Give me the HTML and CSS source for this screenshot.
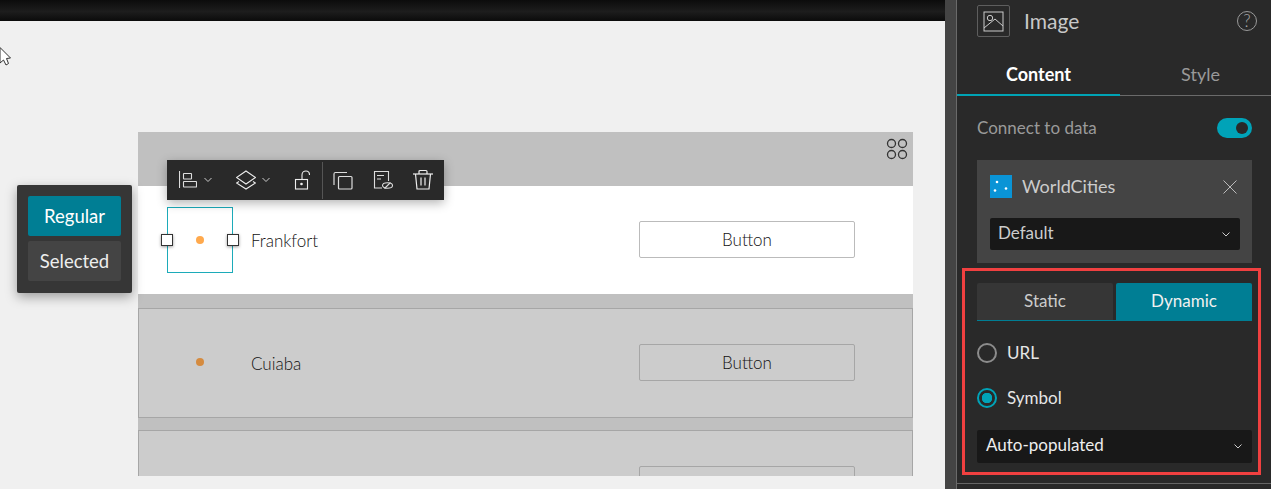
FILE: index.html
```html
<!DOCTYPE html>
<html lang="en">

<head>
  <meta charset="UTF-8" />
  <meta name="viewport" content="width=device-width, initial-scale=1.0" />
  <title>Image widget settings</title>
  <link rel="stylesheet" href="styles.css">
</head>

<body>

  <div class="app">

    <!-- Builder canvas -->
    <main class="stage">
      <div class="topbar"></div>

      <div class="canvas">
        <svg class="cursor" width="12" height="20" viewBox="0 0 12 20">
          <path d="M0 0.500L10.500 11L6.500 11.500L8.500 16.500L6 18L3.500 13L0 16Z" fill="#fff" stroke="#333" stroke-width="1" />
        </svg>

        <div class="list">
          <div class="list-head">
            <svg width="24" height="24" viewBox="0 0 24 24" fill="none" stroke="#333" stroke-width="1.300">
              <circle cx="6.500" cy="6.500" r="4" />
              <circle cx="17.500" cy="6.500" r="4" />
              <circle cx="6.500" cy="17.500" r="4" />
              <circle cx="17.500" cy="17.500" r="4" />
            </svg>
          </div>

          <div class="row row-active">
            <div class="thumb thumb-selected">
              <span class="dot"></span>
              <span class="handle handle-left"></span>
              <span class="handle handle-right"></span>
            </div>
            <span class="city">Frankfort</span>
            <button class="row-btn">Button</button>
          </div>

          <div class="row row-dim">
            <div class="thumb"><span class="dot dot-dim"></span></div>
            <span class="city">Cuiaba</span>
            <button class="row-btn">Button</button>
          </div>

          <!-- only the top of this row is in view -->
          <div class="row row-dim">
            <div class="thumb"></div>
            <button class="row-btn"></button>
          </div>
        </div>

        <!-- Floating toolbar -->
        <div class="toolbar">
          <svg class="tool-align" width="18" height="20" viewBox="0 0 18 20" fill="none" stroke="#ddd" stroke-width="1.100">
            <path d="M0.500 1V18" />
            <rect x="4.500" y="3.500" width="8" height="5.500" rx="0.500" />
            <rect x="4.500" y="11.500" width="13" height="5.500" rx="0.500" />
          </svg>
          <svg class="chev-a" width="8" height="6" viewBox="0 0 8 6" fill="none" stroke="#ccc"><path d="M0.500 1L4 4.500L7.500 1" /></svg>
          <svg class="tool-layers" width="20" height="20" viewBox="0 0 20 20" fill="none" stroke="#eee" stroke-width="1.100">
            <path d="M10 1L19.500 7.500L10 14L0.500 7.500Z" />
            <path d="M3 11.500L0.500 13L10 19L19.500 13L17 11.500" />
          </svg>
          <svg class="chev-b" width="8" height="6" viewBox="0 0 8 6" fill="none" stroke="#ccc"><path d="M0.500 1L4 4.500L7.500 1" /></svg>
          <svg class="tool-lock" width="16" height="20" viewBox="0 0 16 20" fill="none" stroke="#eee" stroke-width="1.100">
            <rect x="1.500" y="9.500" width="12" height="9.500" />
            <path d="M8 9V5C8 2 10 1 12 1S15.500 2.500 15.500 5" />
            <circle cx="7.500" cy="14" r="1.300" fill="#eee" stroke="none" />
          </svg>
          <span class="tool-sep"></span>
          <svg class="tool-copy" width="20" height="20" viewBox="0 0 20 20" fill="none" stroke="#ddd" stroke-width="1.200">
            <path d="M14 2.500H2.500C1.500 2.500 1 3 1 4V15" />
            <rect x="5.500" y="6.500" width="13.500" height="12.500" rx="1" />
          </svg>
          <svg class="tool-doc" width="20" height="20" viewBox="0 0 20 20" fill="none" stroke="#ddd" stroke-width="1.100">
            <path d="M9 18H1.500V1.500H15.500V11" />
            <path d="M4 5.500H11M4 9H8" />
            <ellipse cx="14.500" cy="15.500" rx="5" ry="2.800" />
            <path d="M11.500 18.500L17.500 12.500" />
          </svg>
          <svg class="tool-trash" width="22" height="22" viewBox="0 0 22 22" fill="none" stroke="#eee" stroke-width="1.200">
            <path d="M1 5H21" />
            <path d="M7 5V2.500C7 1.800 7.500 1.500 8 1.500H14C14.500 1.500 15 1.800 15 2.500V5" />
            <path d="M3.500 5L5 20H17L18.500 5" />
            <path d="M9 8.500V16.500M13 8.500V16.500" />
          </svg>
        </div>

        <!-- State switcher -->
        <div class="states">
          <button class="state state-on">Regular</button>
          <button class="state">Selected</button>
        </div>
      </div>
    </main>

    <div class="rail"></div>

    <!-- Settings panel -->
    <aside class="panel">
      <div class="panel-head">
        <div class="widget-icon">
          <svg width="21" height="21" viewBox="0 0 21 21" fill="none" stroke="#ccc" stroke-width="1">
            <rect x="1" y="1" width="19" height="19" />
            <circle cx="7" cy="7" r="2.700" />
            <path d="M1 17L12 8L20 15" />
          </svg>
        </div>
        <h2 class="widget-name">Image</h2>
        <svg class="help" width="22" height="22" viewBox="0 0 22 22" fill="none">
          <circle cx="11" cy="11" r="9.500" stroke="#999" stroke-width="1" />
          <text x="11" y="17" text-anchor="middle" class="help-mark">?</text>
        </svg>
      </div>

      <div class="tabs">
        <div class="tab tab-on">Content</div>
        <div class="tab tab-off">Style</div>
      </div>

      <div class="connect">
        <span>Connect to data</span>
        <span class="toggle"><span class="toggle-knob"></span></span>
      </div>

      <div class="source">
        <div class="source-name">
          <svg width="22" height="23" viewBox="0 0 22 23">
            <rect width="22" height="23" fill="#0a94d6" />
            <circle cx="7" cy="7" r="1.300" fill="#fff" />
            <circle cx="5" cy="15.500" r="1.300" fill="#fff" />
            <circle cx="16" cy="13.500" r="1.300" fill="#fff" />
          </svg>
          <span class="source-text">WorldCities</span>
          <svg class="source-x" width="14" height="14" viewBox="0 0 14 14" stroke="#bbb" stroke-width="1">
            <path d="M0.500 0.500L13.500 13.500M13.500 0.500L0.500 13.500" />
          </svg>
        </div>
        <div class="select select-small">
          <span class="select-text">Default</span>
          <svg width="8" height="5" viewBox="0 0 8 5" fill="none" stroke="#ccc"><path d="M0.500 0.500L4 4L7.500 0.500" /></svg>
        </div>
      </div>

      <section class="dynamic">
        <div class="segments">
          <div class="segment">Static</div>
          <div class="segment segment-on">Dynamic</div>
        </div>

        <label class="radio">
          <span class="radio-mark"></span>
          <span class="radio-text">URL</span>
        </label>
        <label class="radio radio-second">
          <span class="radio-mark radio-mark-on"></span>
          <span class="radio-text">Symbol</span>
        </label>

        <div class="select select-wide">
          <span class="select-text">Auto-populated</span>
          <svg width="8" height="5" viewBox="0 0 8 5" fill="none" stroke="#ccc"><path d="M0.500 0.500L4 4L7.500 0.500" /></svg>
        </div>
      </section>
    </aside>

  </div>

</body>

</html>
```

FILE: styles.css
```css
html,
body {
  margin: 0;
  padding: 0;
  height: 100%;
  overflow: hidden;
}

body {
  font-family: 'Lato', 'Open Sans', sans-serif;
  background: #f0f0f0;
  color: #333;
}

button {
  font-family: inherit;
}

.app {
  display: flex;
  height: 489px;
}

/* Builder canvas */
.stage {
  width: 945px;
  flex-shrink: 0;
  display: flex;
  flex-direction: column;
}

.topbar {
  height: 21px;
  background: linear-gradient(#0c0c0c, #1d1d1d 55%, #0b0b0b);
}

.canvas {
  position: relative;
  flex-grow: 1;
  padding: 111px 0 0 138px;
  overflow: hidden;
}

.cursor {
  position: absolute;
  left: 0;
  top: 26px;
}

.list {
  width: 775px;
  height: 344px;
  background: #c0c0c0;
  overflow: hidden;
}

.list-head {
  height: 54px;
  display: flex;
  justify-content: flex-end;
  padding: 0 4px 0 0;
}

.list-head svg {
  margin-top: 5px;
}

.row {
  display: flex;
  align-items: center;
  padding: 0 58px 0 29px;
  box-sizing: border-box;
}

.row-active {
  height: 108px;
  background: #fff;
  margin-bottom: 14px;
}

.row-dim {
  height: 110px;
  background: #ccc;
  border: 1px solid #a6a6a6;
  margin-bottom: 12px;
  padding-left: 28px;
  padding-right: 57px;
}

.thumb {
  position: relative;
  width: 66px;
  height: 66px;
  box-sizing: border-box;
  display: flex;
  align-items: center;
  justify-content: center;
  flex-shrink: 0;
  margin-top: -2px;
}

.thumb-selected {
  border: 1px solid #1cabb9;
  margin-top: 0;
}

.dot {
  width: 8px;
  height: 8px;
  border-radius: 50%;
  background: #ffa94d;
}

.dot-dim {
  background: #d58b3f;
}

.handle {
  position: absolute;
  top: 26px;
  width: 10px;
  height: 10px;
  background: #fff;
  border: 1px solid #333;
  box-shadow: 0 1px 3px rgba(0, 0, 0, 0.4);
}

.handle-left {
  left: -7px;
}

.handle-right {
  right: -7px;
}

.city {
  margin-left: 18px;
  font-size: 17px;
  font-weight: 300;
  color: #111;
}

.row-btn {
  margin-left: auto;
  width: 216px;
  height: 37px;
  background: #fff;
  border: 1px solid #bbb;
  border-radius: 2px;
  font-size: 17px;
  font-weight: 300;
  color: #111;
  margin-top: -1px;
}

.row-dim .row-btn {
  background: #ccc;
  border-color: #a6a6a6;
}

/* Floating toolbar */
.toolbar {
  position: absolute;
  left: 167px;
  top: 139px;
  width: 277px;
  height: 40px;
  box-sizing: border-box;
  padding-left: 12px;
  display: flex;
  align-items: center;
  background: #292929;
  box-shadow: 0 3px 10px rgba(0, 0, 0, 0.3);
}

.chev-a {
  margin-left: 7px;
}

.tool-layers {
  margin-left: 24px;
}

.chev-b {
  margin-left: 6px;
}

.tool-lock {
  margin-left: 24px;
}

.tool-sep {
  width: 1px;
  height: 37px;
  background: #555;
  margin-left: 12px;
}

.tool-copy {
  margin-left: 10px;
}

.tool-doc {
  margin-left: 20px;
}

.tool-trash {
  margin-left: 19px;
}

/* State switcher */
.states {
  position: absolute;
  left: 17px;
  top: 164px;
  width: 115px;
  height: 108px;
  box-sizing: border-box;
  padding: 11px;
  display: flex;
  flex-direction: column;
  gap: 5px;
  background: #363636;
  border-radius: 2px;
  box-shadow: 0 4px 12px rgba(0, 0, 0, 0.35);
}

.state {
  height: 40px;
  border: none;
  border-radius: 2px;
  background: #444;
  color: #eee;
  font-size: 18.500px;
  padding: 0;
}

.state-on {
  background: #007e94;
  color: #fff;
}

/* Settings panel */
.rail {
  width: 11px;
  flex-shrink: 0;
  background: #444;
}

.panel {
  width: 315px;
  flex-shrink: 0;
  box-sizing: border-box;
  border-left: 1px solid #6a6a6a;
  background: #292929;
  color: #ccc;
  position: relative;
}

.panel::after {
  content: '';
  position: absolute;
  left: 0;
  right: 0;
  top: 483px;
  height: 1px;
  background: #666;
}

.panel-head {
  height: 42px;
  box-sizing: border-box;
  padding: 5px 13px 0 20px;
  display: flex;
  align-items: flex-start;
}

.widget-icon {
  width: 33px;
  height: 32px;
  box-sizing: border-box;
  border: 1px solid #5e5e5e;
  border-radius: 2px;
  display: flex;
  align-items: center;
  justify-content: center;
}

.widget-name {
  margin: 4px 0 0 14px;
  font-size: 21px;
  line-height: 24px;
  font-weight: 400;
  color: #c8c8c8;
}

.help {
  margin: 5px 0 0 auto;
}

.help-mark {
  font-size: 17px;
  font-weight: 300;
  fill: #aaa;
}

.tabs {
  display: flex;
  height: 54px;
  border-bottom: 1px solid #6a6a6a;
  box-sizing: border-box;
  font-size: 18px;
}

.tab {
  flex-shrink: 0;
  display: flex;
  align-items: center;
  justify-content: center;
  padding-top: 12px;
  box-sizing: border-box;
}

.tab-on {
  width: 163px;
  color: #fff;
  font-weight: 700;
  height: 54px;
  border-bottom: 2px solid #00a3b5;
}

.tab-off {
  width: 151px;
  padding-left: 10px;
  padding-bottom: 2px;
  color: #999;
}

.connect {
  height: 64px;
  box-sizing: border-box;
  padding: 21px 19px 0 20px;
  display: flex;
  justify-content: space-between;
  align-items: flex-start;
  font-size: 17px;
  color: #9a9a9a;
}

.toggle {
  width: 35px;
  height: 20px;
  margin-top: 1px;
  border-radius: 10px;
  background: #00a3b8;
  display: flex;
  align-items: center;
  justify-content: flex-end;
  padding-right: 4px;
  box-sizing: border-box;
}

.toggle-knob {
  width: 12px;
  height: 12px;
  border-radius: 50%;
  background: #292929;
}

.source {
  margin-left: 20px;
  width: 275px;
  height: 103px;
  box-sizing: border-box;
  padding: 15px 12px 0 13px;
  background: #444;
}

.source-name {
  display: flex;
  align-items: center;
  height: 23px;
}

.source-text {
  margin-left: 10px;
  font-size: 18px;
  color: #ccc;
  margin-top: -2px;
}

.source-x {
  margin: 0 3px 0 auto;
}

.select {
  display: flex;
  align-items: center;
  justify-content: space-between;
  box-sizing: border-box;
  background: #181818;
  border-radius: 2px;
}

.select-text {
  position: relative;
  top: -2px;
}

.select-small {
  margin-top: 20px;
  height: 32px;
  padding: 0 10px 0 8px;
  font-size: 17px;
  color: #ccc;
}

.dynamic {
  margin: 5px 0 0 5px;
  width: 299px;
  height: 207px;
  box-sizing: border-box;
  border: 3px solid #f04040;
  padding: 12px 6px 0 12px;
  color: #e6e6e6;
  font-size: 17px;
}

.segments {
  display: flex;
  justify-content: space-between;
  border-bottom: 1px solid #007e94;
  height: 38px;
  box-sizing: border-box;
}

.segment {
  width: 136px;
  height: 37px;
  padding-bottom: 2px;
  box-sizing: border-box;
  display: flex;
  align-items: center;
  justify-content: center;
  background: #363636;
  color: #ccc;
  border-radius: 2px 2px 0 0;
}

.segment-on {
  background: #007e94;
  color: #f0f0f0;
}

.radio {
  display: flex;
  align-items: center;
  gap: 10px;
  height: 20px;
  margin-top: 22px;
}

.radio-second {
  margin-top: 25px;
}

.radio-text {
  position: relative;
  top: -1px;
}

.radio-mark {
  width: 20px;
  height: 20px;
  box-sizing: border-box;
  border: 2px solid #8c8c8c;
  border-radius: 50%;
}

.radio-mark-on {
  border-color: #00a3b8;
  background: radial-gradient(circle, #00a3b8 0 5px, transparent 5.500px);
}

.select-wide {
  margin-top: 22px;
  height: 33px;
  padding: 0 10px 0 9px;
  font-size: 17px;
  color: #eee;
}
```
